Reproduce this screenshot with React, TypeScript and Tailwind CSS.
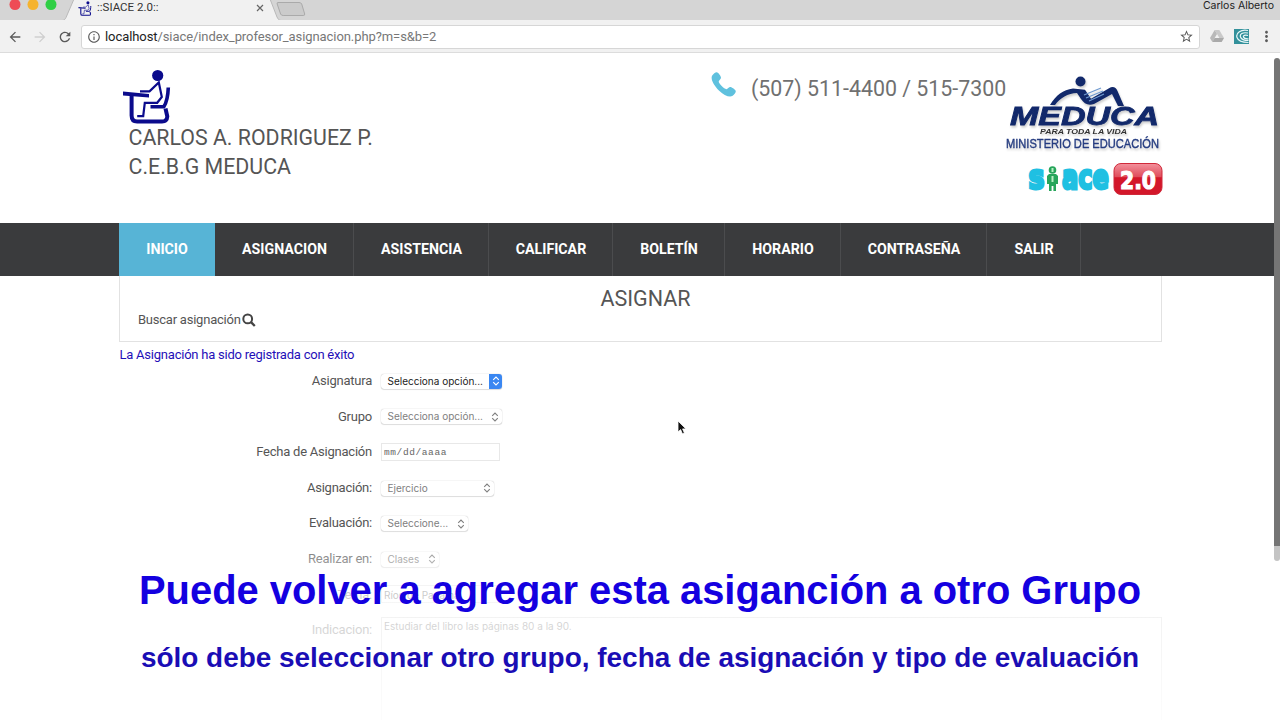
import type { ReactNode } from "react";
import clsx from "clsx";
import {
  MdArrowBack,
  MdArrowForward,
  MdInfoOutline,
  MdMoreVert,
  MdRefresh,
  MdStarBorder,
} from "react-icons/md";

// Menú principal, el ancho va con cada item
const NAV_LINKS = [
  { label: "INICIO", width: "w-[96px]", active: true },
  { label: "ASIGNACION", width: "w-[139px]" },
  { label: "ASISTENCIA", width: "w-[135px]" },
  { label: "CALIFICAR", width: "w-[124px]" },
  { label: "BOLETÍN", width: "w-[112px]" },
  { label: "HORARIO", width: "w-[116px]" },
  { label: "CONTRASEÑA", width: "w-[146px]" },
  { label: "SALIR", width: "w-[94px]" },
];

// Alumno sentado en el pupitre
function DeskIcon({ className }: { className?: string }) {
  return (
    <svg viewBox="0 0 48 55" className={clsx("shrink-0", className)} fill="none" stroke="#0b0b8c">
      <circle cx="34.7" cy="6.500" r="5.6" fill="#0b0b8c" stroke="none" />
      <path d="M0 22.400l26 2.600v3.600L0 26.600z" fill="#0b0b8c" stroke="none" />
      <path d="M8.6 27v19.500q0 6 5.500 6H39q5 0 5.300-5L42.500 39.500" strokeWidth="4" />
      <path d="M45.300 18.500c-.3 8-1 14-4.500 19.200H27.500" strokeWidth="3.600" />
      <path d="M17 22.300h9.500l9.300-8.800 3 14.500-4.600 5.800H21.800l-1.600 13.400h-6" strokeWidth="2.200" />
    </svg>
  );
}

function PhoneIcon() {
  return (
    <svg viewBox="0 0 24 24" className="h-[25px] w-[25px] shrink-0" fill="#5fc1de">
      <path d="M1 3.6C2.2 1.8 4.2.2 5.6.3c1.300 0 4 3.800 4 5.100 0 1.400-2.200 2.400-2.200 3.800 0 2 5.300 7.300 7.400 7.300 1.300 0 2.300-2.100 3.700-2.100 1.300 0 5.200 2.700 5.300 4 .1 1.500-1.600 3.600-3.400 4.700-2.800 1.500-8.300-.9-12.800-5.400C2.900 13 -.6 7 1 3.600z" />
    </svg>
  );
}

function MeducaLogo() {
  return (
    <svg width="160" height="82" viewBox="0 0 160 82" className="drop-shadow-[1px_2px_1px_rgba(0,0,0,0.2)]">
      <g fill="#12296b">
        <circle cx="74.500" cy="5.500" r="5" />
        <path d="M44 29C50 19 57 14 67 12.500l12 1.200 6 9 18-10.500c4-2.300 7-.8 8.500 2.800L118 30h-6l-6-12-18 10c-6 2-10-.5-13-5l-4-6C62 17 54 22 49 29z" />
      </g>
      <path d="M78 19l17-7M80 22l17-7M83 25l15-7" stroke="#6f9ad0" strokeWidth="1.300" fill="none" />
      <text x="4" y="49" textLength="149" lengthAdjust="spacingAndGlyphs" fill="#12296b" className="font-['Liberation_Sans'] text-[25px] font-bold italic" stroke="#12296b" strokeWidth=".8">MEDUCA</text>
      <text x="34" y="58" textLength="87" lengthAdjust="spacingAndGlyphs" fill="#333" className="font-['Liberation_Sans'] text-[8px] font-bold italic">PARA TODA LA VIDA</text>
      <text x="0" y="72" textLength="153" lengthAdjust="spacingAndGlyphs" fill="#253c80" stroke="#253c80" strokeWidth=".4" className="font-['Liberation_Sans'] text-[13.500px]">MINISTERIO DE EDUCACIÓN</text>
    </svg>
  );
}

function SiaceLogo() {
  return (
    <svg width="138" height="36" viewBox="0 0 138 36" className="overflow-visible">
      <defs>
        <linearGradient id="badge" x1="0" y1="0" x2="0" y2="1">
          <stop offset="0" stopColor="#f3919c" />
          <stop offset=".42" stopColor="#e04f5d" />
          <stop offset=".46" stopColor="#d3172a" />
          <stop offset="1" stopColor="#d3172a" />
        </linearGradient>
      </defs>
      <g fill="#1fc0e2" stroke="#1fc0e2" strokeWidth="3" strokeLinejoin="miter" className="font-['DejaVu_Sans'] text-[34px] font-bold">
        <text x="2.500" y="28" textLength="16" lengthAdjust="spacingAndGlyphs">s</text>
        <text x="36" y="28" textLength="47" lengthAdjust="spacingAndGlyphs">ace</text>
      </g>
      {/* la "i" es un muñeco verde */}
      <g fill="#27a55b">
        <circle cx="26.500" cy="9" r="3.800" />
        <path d="M23 13h7l2 2v8h-2v7h-2.600v-5h-1.800v5H23v-7h-2v-8z" />
      </g>
      <path d="M26.500 7v4M26.500 15v6" stroke="#b9f0c5" strokeWidth="2" />
      <rect x="88" y="2.500" width="48" height="31" rx="7" fill="url(#badge)" stroke="#d0293a" />
      <text x="94" y="27.500" textLength="36" lengthAdjust="spacingAndGlyphs" fill="#fff" stroke="#fff" strokeWidth="1.200" className="font-['DejaVu_Sans'] text-[25px] font-bold">2.0</text>
    </svg>
  );
}

function Arrows({ className }: { className?: string }) {
  return (
    <svg viewBox="0 0 8 10" className={clsx("h-[10px] w-[8px]", className)} fill="none" stroke="currentColor" strokeWidth="1.100">
      <path d="M1.200 3.800L4 1l2.800 2.800M1.200 6.200L4 9l2.800-2.800" />
    </svg>
  );
}

function Select({ value, width, primary }: { value: string; width: string; primary?: boolean }) {
  return (
    <div
      className={clsx(
        "mt-px flex h-[15px] items-center justify-between overflow-hidden rounded-[3px] bg-white pl-[6.500px] font-[Inter] text-[10px] shadow-[0_0_1px_rgba(0,0,0,0.35),0_1px_1px_rgba(0,0,0,0.1)]",
        width,
        primary ? "text-[#1c1c1c]" : "text-[#808080]",
      )}
    >
      <span className="whitespace-nowrap">{value}</span>
      {primary ? (
        <span className="flex h-full w-[13px] items-center justify-center bg-[#3a87f2] text-white">
          <Arrows />
        </span>
      ) : (
        <Arrows className="mr-[3px]" />
      )}
    </div>
  );
}

function Row({ label, children }: { label: string; children: ReactNode }) {
  return (
    <div className="flex h-[35.600px] items-center gap-[9px]">
      <label className="w-[372px] text-right text-[13px] tracking-[-0.23px] whitespace-nowrap text-[#555]">{label}</label>
      {children}
    </div>
  );
}

function BrowserBar() {
  return (
    <div className="h-[53px] shrink-0 border-b border-[#dcdcdc] bg-[#f1f1f1]">
      <div className="relative h-5 bg-[#d5d5d5]">
        <svg width="320" height="20" viewBox="0 0 320 20" className="absolute top-0 left-0">
          <path d="M62 20.500c2 0 3-1 4-3L74 -1h196l7 18c1 2 2 3.500 4 3.500z" fill="#f1f1f1" stroke="#b9b9b9" />
          <path d="M278 2.500h21q2 0 2.700 1.500l3 10q.3 1.500-1.500 1.500h-20q-2 0-2.600-1.500l-3.400-10q-.5-1.500.8-1.500z" fill="#cbcbcb" stroke="#aaa" />
          <circle cx="15" cy="4.500" r="5.500" fill="#ee4b55" />
          <circle cx="33" cy="4.500" r="5.500" fill="#f5b32f" />
          <circle cx="51" cy="4.500" r="5.500" fill="#30cf45" />
        </svg>
        <div className="relative flex h-4 items-center pl-[78px]">
          <DeskIcon className="h-[15px] w-[14px]" />
          <span className="ml-[5px] w-[159px] font-[Roboto] text-[11.500px] text-[#333]">::SIACE 2.0::</span>
          <svg width="8" height="8" viewBox="0 0 8 8" stroke="#666" strokeWidth="1.200">
            <path d="M1 1l6 6M7 1L1 7" />
          </svg>
          <span className="mt-[-5px] ml-auto pr-[6px] font-[Inter] text-[10.500px] leading-[12px] text-[#222]">Carlos Alberto</span>
        </div>
      </div>
      <div className="flex h-8 items-center pt-px text-[#5a5a5a]">
        <MdArrowBack className="ml-[7px] h-4 w-4" />
        <MdArrowForward className="ml-[9px] h-4 w-4 text-[#cfcfcf]" />
        <MdRefresh className="ml-[9px] h-4 w-4" />
        <div className="ml-[8px] flex h-6 w-[1119px] items-center rounded-[3px] border border-[#d6d6d6] bg-white pr-[5px] pl-[5px]">
          <MdInfoOutline className="h-[14px] w-[14px]" />
          <span className="ml-[4px] font-[Roboto] text-[13px] tracking-[-0.08px] text-[#777]">
            <span className="text-[#222]">localhost</span>/siace/index_profesor_asignacion.php?m=s&amp;b=2
          </span>
          <MdStarBorder className="ml-auto h-[15px] w-[15px]" />
        </div>
        <svg width="14" height="13" viewBox="0 0 14 13" className="ml-[10px]">
          <path d="M4.700 0h4.600L14 8H9.400z" fill="#c9c9c9" />
          <path d="M4.700 0L0 8l2.300 4L7 4z" fill="#b9b9b9" />
          <path d="M2.300 12L4.600 8H14l-2.300 4z" fill="#aaa" />
        </svg>
        <svg width="15" height="15" viewBox="0 0 15 15" className="ml-[10px]">
          <path d="M0 0h15v15H0z" fill="#33919b" />
          <path d="M14 1.500C7 0 1.500 4 3 8.500s6 5 11.500 5M14 4C8.500 3 5.500 5 6.500 8s4.500 3.500 8 3.500M14 6.500c-3-.8-5 0-4.500 1.500s2 2 5 1.800" fill="none" stroke="#e8f7f8" strokeWidth="1.200" />
        </svg>
        <MdMoreVert className="ml-[9px] h-[17px] w-[17px]" />
      </div>
    </div>
  );
}

function PageHeader() {
  return (
    <header className="flex h-[170px] shrink-0 pl-[119px]">
      <div className="w-[591px] pt-[16px] pl-[4px]">
        <DeskIcon className="h-[55px] w-[48px]" />
        <div className="mt-[-1px] ml-[5.500px] text-[21.350px] leading-[29px] whitespace-nowrap text-[#555]">
          <p>CARLOS A. RODRIGUEZ P.</p>
          <p>C.E.B.G MEDUCA</p>
        </div>
      </div>
      <div className="flex w-[295px] items-start pt-[19px] pl-px">
        <PhoneIcon />
        <span className="ml-[15px] pt-px text-[21.350px] leading-[32px] whitespace-nowrap text-[#707070]">(507) 511-4400 / 515-7300</span>
      </div>
      <div className="flex flex-col pt-[23px] pl-px">
        <MeducaLogo />
        <div className="mt-[3px] ml-[20px]">
          <SiaceLogo />
        </div>
      </div>
    </header>
  );
}

export default function App() {
  return (
    <div className="relative flex h-[720px] w-[1280px] flex-col overflow-hidden bg-white font-[Roboto,sans-serif]">
      <BrowserBar />
      <PageHeader />

      <nav className="flex h-[53px] shrink-0 bg-[#3a3b3d] pl-[119px]">
        {NAV_LINKS.map((link) => (
          <a
            key={link.label}
            className={clsx(
              "flex items-center justify-center text-[14.200px] font-bold text-white",
              link.width,
              link.active ? "bg-[#57b4d6]" : "border-r border-[#4b4c4e] pl-px",
            )}
          >
            {link.label}
          </a>
        ))}
      </nav>

      <section className="ml-[119px] h-[66px] w-[1043px] shrink-0 border border-t-0 border-[#e2e2e2]">
        <h1 className="pt-[9px] pl-[10px] text-center text-[21.500px] leading-7 text-[#555]">ASIGNAR</h1>
        <p className="mt-[-1px] flex items-center pl-[18px] text-[13px] leading-[16px] tracking-[-0.23px] text-[#555]">
          Buscar asignación
          <svg width="14" height="14" viewBox="0 0 14 14" className="ml-px" fill="none" stroke="#444">
            <circle cx="5.700" cy="5.900" r="4.400" strokeWidth="2" />
            <path d="M9 9.200l3.800 3.800" strokeWidth="2.400" />
          </svg>
        </p>
      </section>

      <p className="mt-[4px] ml-[119.500px] h-[17px] text-[13px] leading-[17px] tracking-[-0.23px] text-[#1f0fb8]">La Asignación ha sido registrada con éxito</p>

      <form className="flex flex-col">
        <Row label="Asignatura">
          <Select value="Selecciona opción..." width="w-[121px]" primary />
        </Row>
        <Row label="Grupo">
          <Select value="Selecciona opción..." width="w-[121px]" />
        </Row>
        <Row label="Fecha de Asignación">
          <div className="mt-px flex h-[18px] w-[119px] items-center border border-[#e8e8e8] pt-[2px] pl-[2px] font-['Liberation_Mono'] text-[9.500px] tracking-[0.600px] text-[#666]">mm/dd/aaaa</div>
        </Row>
        <Row label="Asignación:">
          <Select value="Ejercicio" width="w-[113px]" />
        </Row>
        <Row label="Evaluación:">
          <Select value="Seleccione..." width="w-[87px]" />
        </Row>
        <Row label="Realizar en:">
          <Select value="Clases" width="w-[58px]" />
        </Row>
        <Row label="Tema:">
          <div className="flex h-[18px] w-[119px] items-center border border-[#ddd] pt-[2px] pl-[2px] font-[Inter] text-[10px] text-[#444]">Ríos de Panamá</div>
        </Row>
        <div className="flex gap-[9px]">
          <label className="w-[372px] pt-[8px] text-right text-[13px] tracking-[-0.23px] text-[#444]">Indicacion:</label>
          <div className="mt-[5px] h-[120px] w-[781px] border border-[#ccc] pt-[1px] pl-[2px] font-[Inter] text-[10px] text-[#444]">Estudiar del libro las páginas 80 a la 90.</div>
        </div>
      </form>

      {/* scroll de la ventana */}
      <div className="absolute top-[58px] right-0 w-[6px]">
        <div className="h-[488px] rounded-t-[3px] bg-[#757575]" />
        <div className="h-[15px] rounded-b-[3px] bg-[#c4c4c4]" />
      </div>

      {/* puntero */}
      <svg width="10" height="16" viewBox="0 0 10 16" className="absolute top-[420px] left-[677px]">
        <path d="M1 1v11l2.600-2.400 1.800 4.200 2-.9-1.800-4H9z" fill="#111" stroke="#fff" strokeWidth=".8" />
      </svg>

      {/* subtítulos del video con velo blanco */}
      <div className="absolute inset-x-0 bottom-0 h-[190px] w-[1272px] bg-linear-to-b from-white/0 from-0% via-white/70 via-30% to-white/95 to-100% pt-[35px] text-center font-['Liberation_Sans'] font-bold whitespace-nowrap">
        <p className="ml-[8px] text-[39.900px] leading-[50px] text-[#1400e0]">Puede volver a agregar esta asiganción a otro Grupo</p>
        <p className="mt-[27px] ml-[8px] text-[27.950px] leading-[32px] text-[#1a0db5]">sólo debe seleccionar otro grupo, fecha de asignación y tipo de evaluación</p>
      </div>
    </div>
  );
}
